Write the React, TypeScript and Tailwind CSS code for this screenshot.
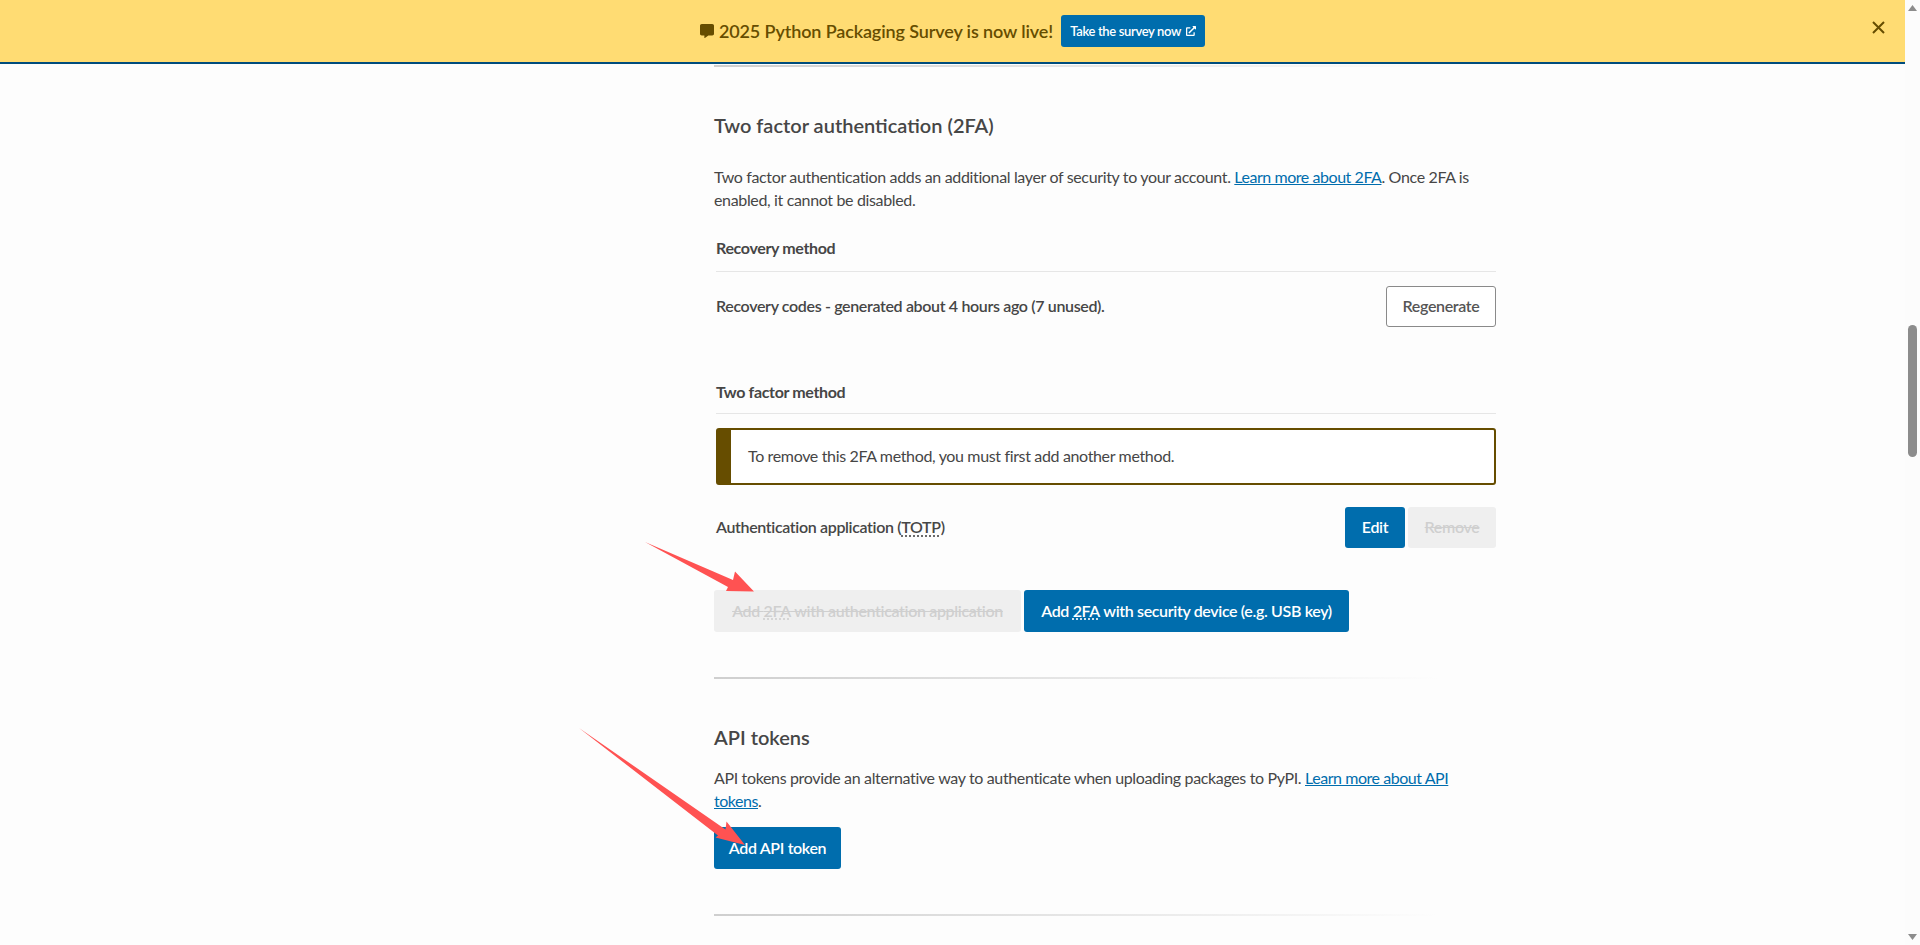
import { FaCommentAlt, FaExternalLinkAlt } from "react-icons/fa";

function Hr({ className = "" }: { className?: string }) {
  return <div className={"h-[2px] w-[725px] bg-gradient-to-r from-[#cfcfcf] to-transparent " + className} />;
}

function Abbr({ children }: { children: string }) {
  return <span className="underline decoration-dotted underline-offset-2">{children}</span>;
}

function Link({ children }: { children: string }) {
  return <a className="text-[#006dad] underline tracking-[-0.45px]">{children}</a>;
}

const primary = "h-[42px] rounded-[3px] bg-[#006dad] text-white font-semibold flex items-center justify-center";
const disabled = "h-[42px] rounded-[3px] bg-[#efefef] text-[#cfcfcf] font-semibold flex items-center justify-center line-through";

export default function App() {
  return (
    <div className="relative flex h-screen overflow-hidden bg-[#fdfdfd] text-[16px] leading-[22.5px] tracking-[-0.35px] text-[#464646] font-['Lato','Noto_Sans',sans-serif]">
      <div className="w-[1905px] shrink-0">
        <div className="relative flex h-[64px] items-center justify-center gap-[8px] border-b-2 border-[#004d7d] bg-[#ffdc73] text-[#664d00]">
          <div className="flex items-center gap-[5px] text-[18px] font-semibold tracking-[-0.12px]">
            <FaCommentAlt className="h-[14px] w-[14px]" />
            <span>2025 Python Packaging Survey is now live!</span>
          </div>
          <button className="flex h-[32px] w-[144px] items-center justify-center gap-[5px] rounded-[3px] bg-[#006dad] text-[13px] font-semibold text-white">
            Take the survey now <FaExternalLinkAlt className="h-[10px] w-[10px]" />
          </button>
          <svg className="absolute right-[20px] top-[21px] h-[13px] w-[13px]" viewBox="0 0 13 13">
            <path d="M1 1 12 12M12 1 1 12" stroke="currentColor" strokeWidth="2" fill="none" />
          </svg>
        </div>

        <div className="pl-[714px] pt-[1px]">
          <Hr />
          <h2 className="mt-[44px] text-[20px] font-semibold leading-[28px] tracking-normal">Two factor authentication (2FA)</h2>
          <p className="mt-[26px] w-[783px] leading-[23px]">
            Two factor authentication adds an additional layer of security to your account. <Link>Learn more about 2FA</Link>. Once 2FA is enabled, it cannot be disabled.
          </p>

          <div className="ml-[2px] w-[780px]">
            <div className="mt-[26px] border-b border-[#e6e6e6] pb-[11px] font-bold">Recovery method</div>
            <div className="mt-[14px] flex h-[41px] items-center justify-between font-semibold">
              <span>Recovery codes - generated about 4 hours ago (7 unused).</span>
              <button className="h-[41px] w-[110px] rounded-[3px] border border-[#8a8a8a] bg-white font-semibold text-[#555]">Regenerate</button>
            </div>

            <div className="mt-[54px] border-b border-[#e6e6e6] pb-[10px] font-bold">Two factor method</div>
            <div className="mt-[14px] flex h-[57px] items-center rounded-[3px] border-2 border-l-[15px] border-[#664d00] bg-white pl-[17px]">
              To remove this 2FA method, you must first add another method.
            </div>

            <div className="mt-[22px] flex h-[41px] items-center justify-between font-semibold">
              <span>Authentication application (<Abbr>TOTP</Abbr>)</span>
              <div className="flex gap-[3px]">
                <button className={primary + " !h-[41px] w-[60px]"}>Edit</button>
                <button className={disabled + " !h-[41px] w-[88px]"}>Remove</button>
              </div>
            </div>
          </div>

          <div className="mt-[42px] flex gap-[3px]">
            <button className={disabled + " w-[307px]"}>Add&nbsp;<Abbr>2FA</Abbr>&nbsp;with authentication application</button>
            <button className={primary + " w-[325px]"}>Add&nbsp;<Abbr>2FA</Abbr>&nbsp;with security device (e.g. USB key)</button>
          </div>

          <Hr className="mt-[45px]" />

          <h2 className="mt-[44px] text-[20px] font-semibold leading-[28px] tracking-normal">API tokens</h2>
          <p className="mt-[16px] w-[783px]">
            API tokens provide an alternative way to authenticate when uploading packages to PyPI. <Link>Learn more about API tokens</Link>.
          </p>
          <button className={primary + " mt-[15px] w-[127px]"}>Add API token</button>

          <Hr className="mt-[45px]" />
        </div>
      </div>

      <div className="relative flex w-[15px] shrink-0 flex-col items-center justify-between bg-[#fcfcfc] py-[5px]">
        <svg width="9" height="6" viewBox="0 0 9 6" className="text-[#8c8c8c]"><path d="M4.5 0 9 6H0z" fill="currentColor" /></svg>
        <div className="absolute left-[3px] top-[325px] h-[132px] w-[9px] rounded-full bg-[#8c8c8c]" />
        <svg width="9" height="6" viewBox="0 0 9 6" className="text-[#8c8c8c]"><path d="M0 0h9L4.5 6z" fill="currentColor" /></svg>
      </div>

      <svg className="absolute left-0 top-0 pointer-events-none" width="1920" height="945" viewBox="0 0 1920 945">
        <path d="M645 542 733 580 735 571.5 754 591.5 726 591 728 587Z" fill="#ff5252" />
        <path d="M579 728 725.5 829.5 726.5 821.5 745 845 715.5 837.5 718 835.5Z" fill="#ff5252" />
      </svg>
    </div>
  );
}
